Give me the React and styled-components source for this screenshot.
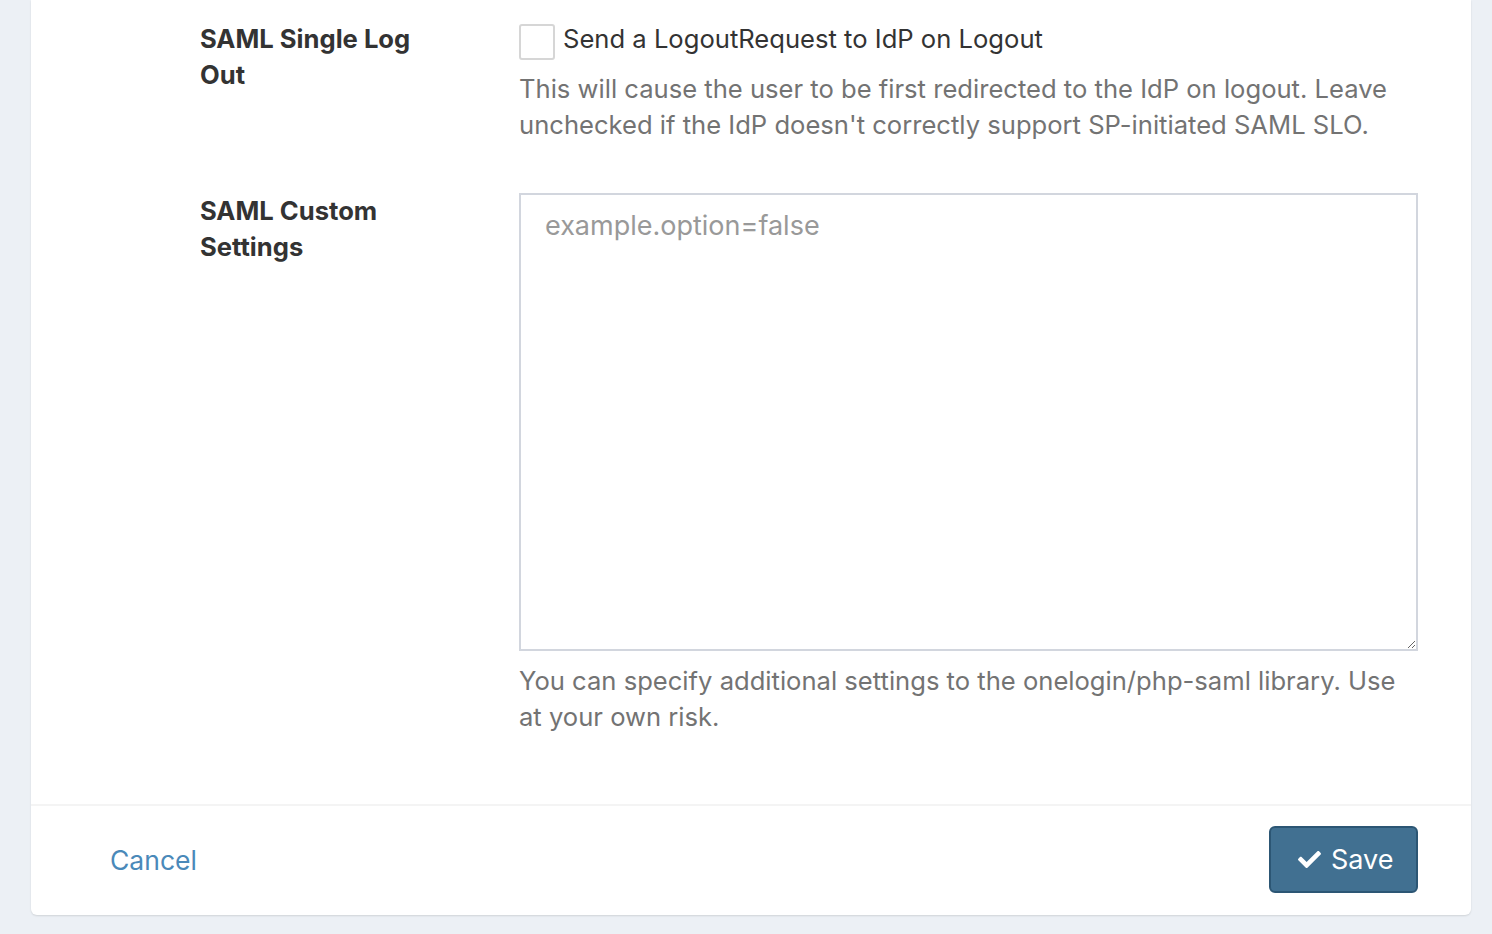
import React from "react";
import styled, { createGlobalStyle } from "styled-components";
import { FaCheck } from "react-icons/fa";

const GlobalStyle = createGlobalStyle`
  html, body {
    margin: 0;
    padding: 0;
    background: #ecf0f5;
    font-family: Inter, "Helvetica Neue", "Liberation Sans", Arial, sans-serif;
    font-size: 25.6px;
    line-height: 36px;
    color: #333;
  }
`;

export default function App() {
  return (
    <Page>
      <GlobalStyle />
      <Card>
        <FormBody>
          <Row>
            <Label>SAML Single Log Out</Label>
            <Control>
              <CheckLine>
                <CheckBox type="checkbox" />
                <span>Send a LogoutRequest to IdP on Logout</span>
              </CheckLine>
              <Help $gap={14}>
                This will cause the user to be first redirected to the IdP on logout. Leave
                unchecked if the IdP doesn't correctly support SP-initiated SAML SLO.
              </Help>
            </Control>
          </Row>
          <Row>
            <Label>SAML Custom Settings</Label>
            <Control>
              <TextArea placeholder="example.option=false" />
              <Help $gap={12}>
                You can specify additional settings to the onelogin/php-saml library. Use
                at your own risk.
              </Help>
            </Control>
          </Row>
        </FormBody>
        <Footer>
          <CancelLink href="#">Cancel</CancelLink>
          <SaveButton type="button">
            <FaCheck size={23} />
            Save
          </SaveButton>
        </Footer>
      </Card>
    </Page>
  );
}

const Page = styled.div`
  padding: 0 21px 19px 31px;
`;
const Card = styled.div`
  width: 1440px;
  background: #fff;
  border-radius: 0 0 6px 6px;
  box-shadow: 0 1px 2px rgba(0, 0, 0, 0.12);
`;
const FormBody = styled.div`
  padding: 21px 53px 69px 169px;
  display: flex;
  flex-direction: column;
  gap: 50px;
`;
const Row = styled.div`
  display: grid;
  grid-template-columns: 319px 899px;
`;
const Label = styled.div`
  font-weight: 700;
  max-width: 240px;
`;
const Control = styled.div`
  display: flex;
  flex-direction: column;
`;
const CheckLine = styled.label`
  display: flex;
  align-items: center;
  gap: 8px;
  height: 36px;
  color: #333;
`;
const CheckBox = styled.input`
  appearance: none;
  margin: 6px 0 0 0;
  width: 36px;
  height: 36px;
  box-sizing: border-box;
  border: 2px solid #d6d6d6;
  border-radius: 3px;
  background: #fff;
`;
const Help = styled.p`
  margin: ${(p) => p.$gap}px 0 0 0;
  color: #737373;
`;
const TextArea = styled.textarea`
  box-sizing: border-box;
  width: 899px;
  height: 458px;
  border: 2px solid #d2d6de;
  border-radius: 0;
  padding: 13px 24px;
  font-family: inherit;
  font-size: 27px;
  line-height: 36px;
  color: #555;
  outline: none;
  resize: vertical;
  &::placeholder {
    color: #999;
  }
`;
const Footer = styled.div`
  display: flex;
  align-items: center;
  justify-content: space-between;
  border-top: 2px solid #f4f4f4;
  padding: 20px 53px 22px 79px;
`;
const CancelLink = styled.a`
  color: #4a89b9;
  text-decoration: none;
  font-size: 26.5px;
`;
const SaveButton = styled.button`
  display: flex;
  align-items: center;
  gap: 10px;
  box-sizing: border-box;
  height: 67px;
  width: 149px;
  padding: 0 0 0 27px;
  background: #417091;
  border: 2px solid #2c5674;
  border-radius: 6px;
  color: #fff;
  font-family: inherit;
  font-size: 27px;
`;
